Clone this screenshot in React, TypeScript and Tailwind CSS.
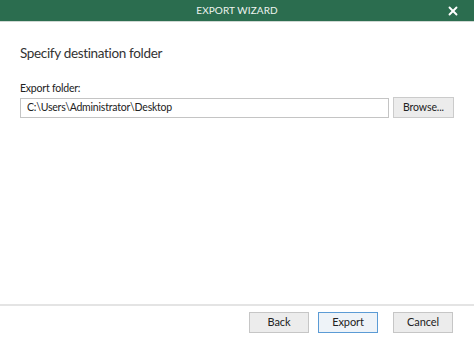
import { X } from "lucide-react";

const ui = "font-['Lato','Noto_Sans',sans-serif]";

export default function App() {
  return (
    <div className={`flex h-[339px] w-[474px] flex-col bg-white ${ui} text-[#1e1e1e]`}>
      <header className="relative flex h-[22px] shrink-0 items-center justify-center border-b border-[#cfd8d3] bg-[#2b6d4f]">
        <span className="text-[10px] tracking-[0.01em] text-[#eef4f0]">EXPORT WIZARD</span>
        <button className="absolute right-[14px] top-[4px] text-white">
          <X className="h-[14px] w-[14px]" strokeWidth={3.2} />
        </button>
      </header>

      <main className="flex flex-1 flex-col px-5 pt-[22px]">
        <h1 className="text-[13.5px] leading-[18px] tracking-[-0.025em] text-[#333]">
          Specify destination folder
        </h1>

        <label className="mt-[19px] text-[10.5px] leading-[14px] tracking-[-0.02em] text-[#222]">
          Export folder:
        </label>
        <div className="mt-[2px] flex items-center gap-[4px]">
          <div className="flex h-[20px] w-[369px] items-center border border-[#c4c4c4] px-[6px] text-[10.5px] tracking-[-0.02em] text-[#222]">
            C:\Users\Administrator\Desktop
          </div>
          <button className="h-[21px] w-[61px] border border-[#cbcbcb] bg-[#ececec] text-[10.5px] tracking-[-0.01em] text-[#222]">
            Browse...
          </button>
        </div>
      </main>

      <footer className="flex h-[35px] shrink-0 items-center justify-end gap-[9px] border-t-2 border-[#e4e4e4] pr-[21px]">
        <button className="h-[21px] w-[60px] border border-[#c6c6c6] bg-[#ececec] text-[11px] tracking-[-0.01em] text-[#222]">
          Back
        </button>
        <button className="mr-[6px] h-[21px] w-[60px] border border-[#5b9bd5] bg-[#eef3f8] text-[11px] tracking-[-0.01em] text-[#222]">
          Export
        </button>
        <button className="h-[21px] w-[60px] border border-[#c6c6c6] bg-[#ececec] text-[11px] tracking-[-0.01em] text-[#222]">
          Cancel
        </button>
      </footer>
    </div>
  );
}
